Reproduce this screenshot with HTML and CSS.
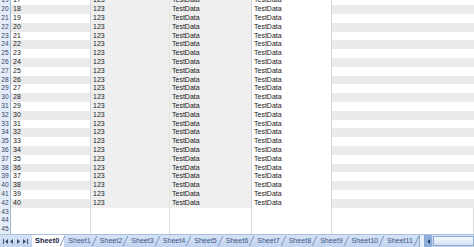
FILE: index.html
```html
<!DOCTYPE html>
<html>
<head>
<meta charset="utf-8">
<link rel="stylesheet" href="styles.css">
</head>
<body>
<div class="sheet" id="sheet"></div>
<div class="tabbar">
  <div class="nav">
    <svg width="31" height="13" viewBox="0 0 31 13">
      <rect x="3" y="4" width="1" height="5" fill="#3a4f73"/>
      <polygon points="8,4 8,9 5,6.5" fill="#3a4f73"/>
      <polygon points="13,4 13,9 10,6.5" fill="#3a4f73"/>
      <polygon points="17,4 17,9 20,6.5" fill="#3a4f73"/>
      <polygon points="23,4 23,9 26,6.5" fill="#3a4f73"/>
      <rect x="27" y="4" width="1" height="5" fill="#3a4f73"/>
    </svg>
  </div>
  <div class="tabs">
    <span class="tab active">Sheet0</span>
    <span class="tab">Sheet1</span>
    <span class="tab">Sheet2</span>
    <span class="tab">Sheet3</span>
    <span class="tab">Sheet4</span>
    <span class="tab">Sheet5</span>
    <span class="tab">Sheet6</span>
    <span class="tab">Sheet7</span>
    <span class="tab">Sheet8</span>
    <span class="tab">Sheet9</span>
    <span class="tab">Sheet10</span>
    <span class="tab">Sheet11</span>
  </div>
  <div class="split"></div>
  <div class="sbtn"><svg width="6" height="7" viewBox="0 0 6 7"><polygon points="4,1 4,6 1.5,3.5" fill="#1f3560"/></svg></div>
  <div class="thumb"></div>
</div>
<script src="app.js"></script>
</body>
</html>
```

FILE: app.js
```js
var sheet = document.getElementById('sheet');
var html = '';
for (var r = 19; r <= 45; r++) {
  var data = r <= 42;
  var cls = 'row' + (data ? ' data' : ' empty') + (data && r % 2 === 0 ? ' alt' : '');
  html += '<div class="' + cls + '">' +
    '<div class="hdr">' + r + '</div>' +
    '<div class="c ca">' + (data ? (r - 2) : '') + '</div>' +
    '<div class="c cb">' + (data ? '123' : '') + '</div>' +
    '<div class="c cc">' + (data ? 'TestData' : '') + '</div>' +
    '<div class="c cd">' + (data ? 'TestData' : '') + '</div>' +
    '<div class="c ce"></div>' +
    '</div>';
}
sheet.innerHTML = html;
```

FILE: styles.css
```css
html, body {
  margin: 0;
  padding: 0;
  width: 474px;
  height: 247px;
  overflow: hidden;
  background: #fff;
  font-family: "Liberation Sans", Arial, sans-serif;
}
.sheet {
  margin-top: -3.6px;
  height: 237.6px;
  overflow: hidden;
}
.row {
  display: grid;
  grid-template-columns: 11px 80px 79px 82px 80px 142px;
  height: 8.8px;
  font-size: 7px;
  line-height: 8.8px;
  color: #202020;
}
.hdr {
  background: #e4ecf7;
  border-right: 1px solid #9eb6ce;
  border-bottom: 1px solid #c5d3e3;
  color: #34486a;
  text-align: center;
  font-size: 6.6px;
  box-sizing: border-box;
}
.c {
  box-sizing: border-box;
  padding-left: 2px;
  white-space: nowrap;
  overflow: hidden;
}
.data .ca { background: #fff; }
.data.alt .ca { background: #ebebeb; }
.data .cb, .data .cc { background: #efefef; }
.data .cb { border-right: 1px solid #e4e4e4; }
.data .cc { border-right: 1px solid #d6d6d6; }
.data .ca { border-right: 1px solid #d6d6d6; }
.data .cd {
  background: #fff;
  border-bottom: 1px solid #dcdcdc;
  border-right: 1px solid #d6d6d6;
}
.data .ce { background: #fff; }
.data.alt .ce { background: #ebebeb; }
.empty .c {
  background: #fff;
  border-bottom: 1px solid #e0e0e0;
  border-right: 1px solid #dcdcdc;
}
.tabbar {
  display: flex;
  align-items: stretch;
  height: 13px;
  background: linear-gradient(#d6e3f5, #c0d3ee);
  border-top: 1px solid #a9bfdc;
  box-sizing: border-box;
}
.nav {
  width: 32px;
  flex: none;
  display: flex;
  align-items: center;
}
.tabs {
  display: flex;
  flex: none;
  width: 387px;
  overflow: hidden;
}
.tab {
  position: relative;
  font-size: 7.1px;
  line-height: 12px;
  color: #3b5688;
  padding: 0 5px 0 4px;
  white-space: nowrap;
}
.tab::after {
  content: "";
  position: absolute;
  right: 1px;
  top: 1px;
  bottom: 1px;
  width: 0;
  border-right: 1px solid #7d97bd;
  transform: skewX(-25deg);
}
.tab.active {
  background: #fff;
  color: #15203a;
  font-weight: bold;
  font-size: 7.4px;
  padding: 0 5px 0 3px;
}
.split {
  width: 4px;
  flex: none;
  background: #e9f0fa;
  border-left: 1px solid #8ea9cf;
  border-right: 1px solid #8ea9cf;
}
.sbtn {
  width: 7px;
  flex: none;
  background: #8cadd9;
  display: flex;
  align-items: center;
  justify-content: center;
}
.thumb {
  flex: 1;
  margin: 1px 0 1px 1px;
  background: linear-gradient(#f4f8fd, #d5e2f3);
  border: 1px solid #8ea9cf;
}
```
